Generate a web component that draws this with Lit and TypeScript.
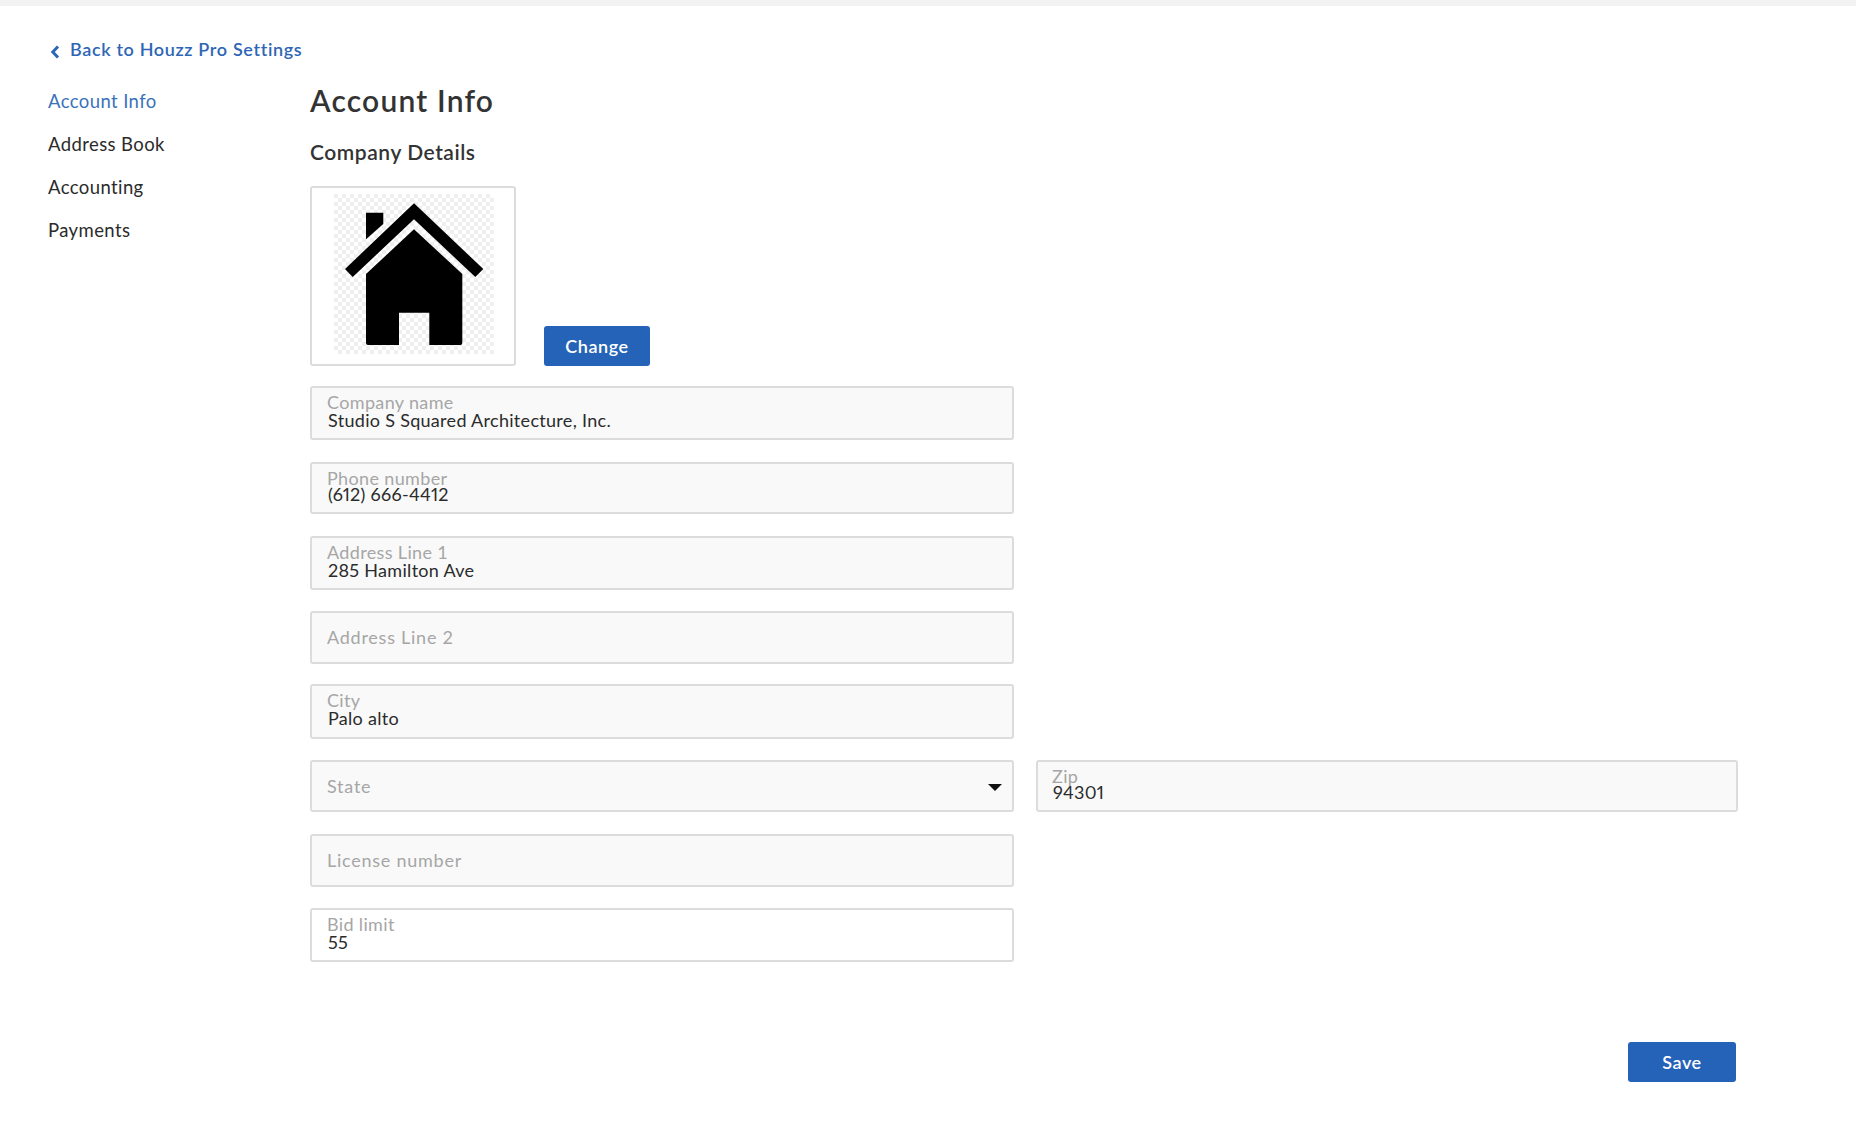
import { LitElement, html, css } from "lit";
import { customElement } from "lit/decorators.js";
import { styleMap } from "lit/directives/style-map.js";

type F = { label: string; value?: string; h: number; mt: number; white?: boolean; tight?: boolean };

const col1: F[] = [
  { label: "Company name", value: "Studio S Squared Architecture, Inc.", h: 54, mt: 20 },
  { label: "Phone number", value: "(612) 666-4412", h: 52, mt: 22, tight: true },
  { label: "Address Line 1", value: "285 Hamilton Ave", h: 54, mt: 22 },
  { label: "Address Line 2", h: 53, mt: 21 },
  { label: "City", value: "Palo alto", h: 55, mt: 20 },
];
const col2: F[] = [
  { label: "License number", h: 53, mt: 22 },
  { label: "Bid limit", value: "55", h: 54, mt: 21, white: true },
];

@customElement("app-root")
export class AppRoot extends LitElement {
  static styles = css`
    :host {
      display: block;
      width: 1856px;
      height: 1124px;
      background: #fff;
      font-family: "Lato", "Liberation Sans", sans-serif;
      color: #2b2b2b;
      overflow: hidden;
    }
    .topbar { height: 6px; background: #f2f2f2; }
    .page { padding: 0 118px 0 48px; }
    .back {
      display: flex;
      align-items: center;
      gap: 10px;
      height: 24px;
      margin-top: 31px;
      color: #2e66b5;
      font-family: "Lato Semibold", "Lato", sans-serif;
      font-size: 18px;
      letter-spacing: 0.65px;
    }
    .back svg { display: block; margin-top: 5px; margin-left: 2px; }
    .cols { display: flex; margin-top: 22px; }
    .nav { flex: none; width: 262px; display: flex; flex-direction: column; padding-top: 5.5px; }
    .nav a { display: block; height: 24px; line-height: 24px; font-size: 18.5px; letter-spacing: 0.4px; margin-bottom: 19px; color: #2b2b2b; }
    .nav a.active { color: #3a72bb; }
    .main { flex: 1; }
    h1 { margin: -1px 0 0; font-family: "Lato Semibold", "Lato", sans-serif; font-size: 30px; line-height: 36px; font-weight: 400; color: #333; letter-spacing: 1.2px; }
    h2 { margin: 21px 0 0; font-family: "Lato Semibold", "Lato", sans-serif; font-size: 21px; line-height: 26px; font-weight: 400; color: #333; letter-spacing: 0.55px; }
    .logo-row { display: flex; align-items: flex-end; gap: 28px; margin-top: 21px; }
    .logo {
      box-sizing: border-box;
      width: 206px;
      height: 180px;
      border: 2px solid #dcdcdc;
      border-radius: 3px;
      padding: 6px 0 0 22px;
      background: #fff;
    }
    .logo svg { display: block; }
    .btn {
      border: 0;
      background: #2563b9;
      color: #fff;
      border-radius: 3px;
      font: 400 18px "Lato Semibold", "Lato", sans-serif;
      letter-spacing: 0.55px;
      height: 40px;
      padding: 0 0 1px;
      display: block;
    }
    .change { width: 106px; }
    .field {
      box-sizing: border-box;
      width: 704px;
      border: 2px solid #dcdcdc;
      border-radius: 3px;
      background: #f9f9f9;
      padding: 0 15px;
      display: flex;
      flex-direction: column;
      justify-content: center;
      position: relative;
      font-size: 18px;
    }
    .field.filled { justify-content: flex-start; padding-top: 4.5px; }
    .field.white { background: #fff; }
    .lbl { color: #a6a6a6; line-height: 18px; letter-spacing: 0.35px; }
    .field:not(.filled) .lbl { letter-spacing: 0.75px; margin-top: -1px; }
    .val { color: #2b2b2b; line-height: 18px; letter-spacing: 0.3px; margin-left: 1px; font-variant-numeric: proportional-nums; }
    .tight .lbl, .zip .lbl, .tight .val, .zip .val { line-height: 16px; }
    .tight, .zip { padding-top: 5.5px !important; }
    .state-row { display: flex; gap: 22px; margin-top: 21px; }
    .state-row .field { height: 52px; }
    .zip { width: 702px; padding-left: 14px; }
    .caret { position: absolute; right: 10px; top: 22px; }
    .footer { display: flex; justify-content: flex-end; margin-top: 80px; padding-right: 2px; }
    .save { width: 108px; }
  `;

  private field(f: F) {
    const st = styleMap({ height: f.h + "px", marginTop: f.mt + "px" });
    return html`<div class="field ${f.white ? "white" : ""} ${f.value ? "filled" : ""} ${f.tight ? "tight" : ""}" style=${st}>
      <div class="lbl">${f.label}</div>
      ${f.value ? html`<div class="val">${f.value}</div>` : ""}
    </div>`;
  }

  render() {
    return html`
      <div class="topbar"></div>
      <div class="page">
        <div class="back">
          <svg width="10" height="14" viewBox="0 0 10 14"><path d="M8 1.5 2.8 7 8 12.5" fill="none" stroke="#2e66b5" stroke-width="3"/></svg>
          <span>Back to Houzz Pro Settings</span>
        </div>
        <div class="cols">
          <nav class="nav">
            <a class="active">Account Info</a>
            <a>Address Book</a>
            <a>Accounting</a>
            <a>Payments</a>
          </nav>
          <div class="main">
            <h1>Account Info</h1>
            <h2>Company Details</h2>
            <div class="logo-row">
              <div class="logo">
                <svg width="160" height="160" viewBox="0 0 160 160">
                  <defs>
                    <pattern id="chk" width="8" height="8" patternUnits="userSpaceOnUse">
                      <rect width="8" height="8" fill="#fff"/>
                      <rect width="4" height="4" fill="#efefef"/>
                      <rect x="4" y="4" width="4" height="4" fill="#efefef"/>
                    </pattern>
                  </defs>
                  <rect width="160" height="160" fill="url(#chk)"/>
                  <path d="M80 9.3 149.3 75 141.3 83 80 25.3 18.7 83 11 75Z" fill="#000"/>
                  <path d="M32 18.7H49.3V30L32 45.3Z" fill="#000"/>
                  <path d="M80 35.3 128.3 80V149a2 2 0 0 1-2 2H95.3V118.7H65V151H34a2 2 0 0 1-2-2V80Z" fill="#000"/>
                </svg>
              </div>
              <button class="btn change">Change</button>
            </div>
            ${col1.map((f) => this.field(f))}
            <div class="state-row">
              <div class="field">
                <div class="lbl">State</div>
                <svg class="caret" width="14" height="7" viewBox="0 0 14 7"><path d="M0 0H14L7 7Z" fill="#111"/></svg>
              </div>
              <div class="field filled zip">
                <div class="lbl">Zip</div>
                <div class="val">94301</div>
              </div>
            </div>
            ${col2.map((f) => this.field(f))}
            <div class="footer"><button class="btn save">Save</button></div>
          </div>
        </div>
      </div>
    `;
  }
}
